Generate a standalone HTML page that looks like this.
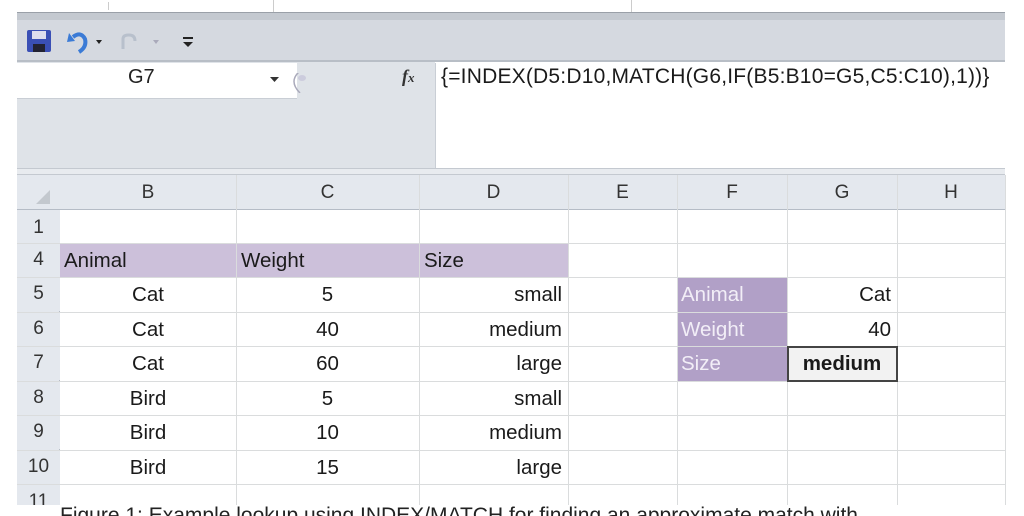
<!DOCTYPE html>
<html><head><meta charset="utf-8"><style>
*{margin:0;padding:0;box-sizing:border-box}
body{width:1024px;height:516px;overflow:hidden;background:#fff;font-family:"Liberation Sans",sans-serif;position:relative}
.a{position:absolute}
.c{position:absolute;font-size:20.5px;color:#1a1a1a;line-height:34px;white-space:nowrap}
.hl{position:absolute;height:1px;background:#dadcdd}
.vl{position:absolute;width:1px;background:#dadcdd}
.rh{position:absolute;left:17px;width:43px;text-align:center;font-size:19px;color:#333;background:#e4e8ee;line-height:34px}
.ch{position:absolute;top:175px;height:35px;line-height:35px;text-align:center;font-size:19px;color:#333}
</style></head><body>
<div class="a" style="left:17px;top:0;width:988px;height:12px;background:#fff"></div>
<div class="a" style="left:108px;top:2px;width:1px;height:8px;background:#ccc"></div>
<div class="a" style="left:273px;top:0;width:1px;height:12px;background:#ccc"></div>
<div class="a" style="left:631px;top:0;width:1px;height:12px;background:#ccc"></div>
<div class="a" style="left:17px;top:12px;width:988px;height:8px;background:#c4c9d0;border-top:1px solid #9aa0a8"></div>
<div class="a" style="left:17px;top:20px;width:988px;height:42px;background:#d5d9e0;border-bottom:2px solid #b8bec6"></div>
<svg class="a" style="left:27px;top:29px" width="170" height="26" viewBox="0 0 170 26">
<rect x="0" y="1" width="24" height="22" fill="#3a4fb5" rx="2"/><rect x="5" y="2" width="14" height="8" fill="#dde"/><rect x="6" y="15" width="12" height="8" fill="#223"/>
<path d="M46 8 q8-6 12 2 q2 8-6 13" stroke="#3b7bd6" stroke-width="4" fill="none"/><path d="M42 4 l6 8 l-8 1z" fill="#3b7bd6"/>
<path d="M69 11 l6 0 l-3 4z" fill="#222"/>
<path d="M96 20 l0-10 q0-4 6-4 q6 0 6 6" stroke="#b8c0cc" stroke-width="3" fill="none"/>
<path d="M126 11 l6 0 l-3 4z" fill="#aab"/>
<rect x="156" y="8" width="10" height="2" fill="#222"/><path d="M156 13 l10 0 l-5 5z" fill="#222"/>
</svg>
<div class="a" style="left:17px;top:62px;width:418px;height:106px;background:#dfe3e8"></div>
<div class="a" style="left:17px;top:63px;width:280px;height:36px;background:#fff;border-bottom:1px solid #c9ced5"></div>
<div class="a" style="left:128px;top:66px;font-size:20px;color:#222">G7</div>
<svg class="a" style="left:270px;top:73px" width="40" height="20"><path d="M0 4 l9 0 l-4.5 5z" fill="#333"/><path d="M30 -2 q-12 10 0 22" stroke="#aab" fill="none" stroke-width="1.5"/><ellipse cx="32" cy="5" rx="4" ry="3" fill="#ccd"/></svg>
<div class="a" style="left:402px;top:66px;font:italic bold 18px 'Liberation Serif',serif;color:#333">f<span style="font-size:13px">x</span></div>
<div class="a" style="left:435px;top:63px;width:570px;height:105px;background:#fff;border-left:1px solid #c9ced5"></div>
<div class="a" style="left:441px;top:65px;font-size:21px;color:#1a1a1a;white-space:nowrap;letter-spacing:0.2px">{=INDEX(D5:D10,MATCH(G6,IF(B5:B10=G5,C5:C10),1))}</div>
<div class="a" style="left:17px;top:168px;width:988px;height:7px;background:#e8ebef;border-top:1px solid #c4c9d0;border-bottom:1px solid #c4c9d0"></div>
<div class="a" style="left:17px;top:175px;width:988px;height:35px;background:#e4e8ee;border-bottom:1px solid #b5bcc6"></div>
<svg class="a" style="left:34px;top:188px" width="18" height="18"><path d="M16 2 L16 16 L2 16z" fill="#c3c8ce"/></svg>
<div class="ch" style="left:60px;width:176px">B</div>
<div class="ch" style="left:236px;width:183px">C</div>
<div class="ch" style="left:419px;width:149px">D</div>
<div class="ch" style="left:568px;width:109px">E</div>
<div class="ch" style="left:677px;width:110px">F</div>
<div class="ch" style="left:787px;width:110px">G</div>
<div class="ch" style="left:897px;width:108px">H</div>
<div class="a" style="left:17px;top:210px;width:43px;height:295px;background:#e4e8ee;border-right:1px solid #b5bcc6"></div>
<div class="rh" style="top:210px;height:33px;line-height:35px">1</div>
<div class="rh" style="top:243px">4</div>
<div class="rh" style="top:277px">5</div>
<div class="rh" style="top:312px">6</div>
<div class="rh" style="top:346px">7</div>
<div class="rh" style="top:381px">8</div>
<div class="rh" style="top:415px">9</div>
<div class="rh" style="top:450px">10</div>
<div class="rh" style="top:484px;line-height:36px;height:21px;overflow:hidden">11</div>
<div class="a" style="left:60px;top:243px;width:508px;height:34px;background:#ccc0da"></div>
<div class="a" style="left:677px;top:277px;width:110px;height:104px;background:#b1a0c7"></div>
<div class="vl" style="left:236px;top:175px;height:330px"></div>
<div class="vl" style="left:419px;top:175px;height:330px"></div>
<div class="vl" style="left:568px;top:175px;height:330px"></div>
<div class="vl" style="left:677px;top:175px;height:330px"></div>
<div class="vl" style="left:787px;top:175px;height:330px"></div>
<div class="vl" style="left:897px;top:175px;height:330px"></div>
<div class="vl" style="left:1005px;top:175px;height:330px"></div>
<div class="hl" style="left:17px;top:243px;width:988px"></div>
<div class="hl" style="left:17px;top:277px;width:988px"></div>
<div class="hl" style="left:17px;top:312px;width:988px"></div>
<div class="hl" style="left:17px;top:346px;width:988px"></div>
<div class="hl" style="left:17px;top:381px;width:988px"></div>
<div class="hl" style="left:17px;top:415px;width:988px"></div>
<div class="hl" style="left:17px;top:450px;width:988px"></div>
<div class="hl" style="left:17px;top:484px;width:988px"></div>
<div class="a" style="left:787px;top:346px;width:111px;height:36px;background:#f2f2f2;border:2px solid #444"></div>
<div class="c" style="left:64px;top:244px">Animal</div>
<div class="c" style="left:241px;top:244px">Weight</div>
<div class="c" style="left:424px;top:244px">Size</div>
<div class="c" style="left:60px;top:278px;width:176px;text-align:center">Cat</div>
<div class="c" style="left:236px;top:278px;width:183px;text-align:center">5</div>
<div class="c" style="left:419px;top:278px;width:143px;text-align:right">small</div>
<div class="c" style="left:60px;top:313px;width:176px;text-align:center">Cat</div>
<div class="c" style="left:236px;top:313px;width:183px;text-align:center">40</div>
<div class="c" style="left:419px;top:313px;width:143px;text-align:right">medium</div>
<div class="c" style="left:60px;top:347px;width:176px;text-align:center">Cat</div>
<div class="c" style="left:236px;top:347px;width:183px;text-align:center">60</div>
<div class="c" style="left:419px;top:347px;width:143px;text-align:right">large</div>
<div class="c" style="left:60px;top:382px;width:176px;text-align:center">Bird</div>
<div class="c" style="left:236px;top:382px;width:183px;text-align:center">5</div>
<div class="c" style="left:419px;top:382px;width:143px;text-align:right">small</div>
<div class="c" style="left:60px;top:416px;width:176px;text-align:center">Bird</div>
<div class="c" style="left:236px;top:416px;width:183px;text-align:center">10</div>
<div class="c" style="left:419px;top:416px;width:143px;text-align:right">medium</div>
<div class="c" style="left:60px;top:451px;width:176px;text-align:center">Bird</div>
<div class="c" style="left:236px;top:451px;width:183px;text-align:center">15</div>
<div class="c" style="left:419px;top:451px;width:143px;text-align:right">large</div>
<div class="c" style="left:681px;top:278px;color:#f2eef7">Animal</div>
<div class="c" style="left:681px;top:313px;color:#f2eef7">Weight</div>
<div class="c" style="left:681px;top:347px;color:#f2eef7">Size</div>
<div class="c" style="left:787px;top:278px;width:104px;text-align:right">Cat</div>
<div class="c" style="left:787px;top:313px;width:104px;text-align:right">40</div>
<div class="c" style="left:787px;top:347px;width:110px;text-align:center;font-weight:bold">medium</div>
<div class="a" style="left:0;top:505px;width:1024px;height:11px;background:#fff;overflow:hidden">
<div style="position:absolute;left:60px;top:-1px;font-size:21px;color:#222;white-space:nowrap">Figure 1: Example lookup using INDEX/MATCH for finding an approximate match with</div></div>
</body></html>
